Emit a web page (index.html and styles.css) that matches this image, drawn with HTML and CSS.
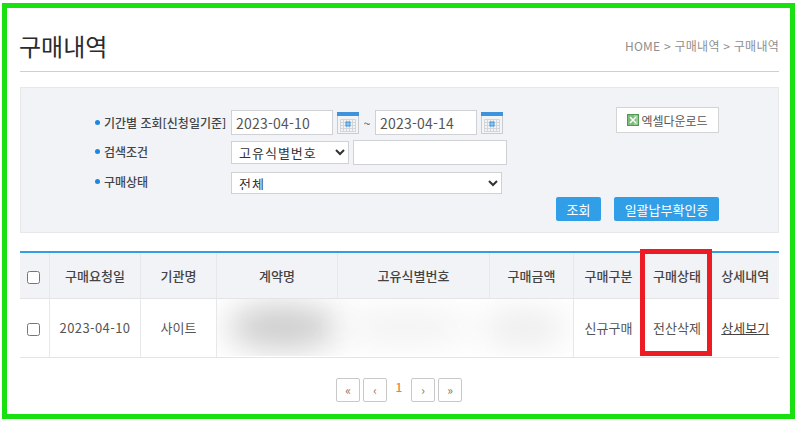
FILE: index.html
```html
<!DOCTYPE html>
<html lang="ko">
<head>
<meta charset="utf-8">
<title>구매내역</title>
<link rel="stylesheet" href="styles.css">
</head>
<body>
<main class="frame">
  <header class="head">
    <h1 class="title">구매내역</h1>
    <div class="crumbs">HOME &gt; 구매내역 &gt; 구매내역</div>
  </header>
  <section class="panel">
    <form class="form">
      <div class="row">
        <label class="label">기간별 조회[신청일기준]</label>
        <input class="date" type="text" value="2023-04-10">
        <svg class="cal" viewBox="0 0 22 22"><use href="#cal"/></svg>
        <span class="tilde">~</span>
        <input class="date" type="text" value="2023-04-14">
        <svg class="cal" viewBox="0 0 22 22"><use href="#cal"/></svg>
      </div>
      <div class="row">
        <label class="label">검색조건</label>
        <select class="sel sel-id"><option>고유식별번호</option></select>
        <input class="keyword" type="text">
      </div>
      <div class="row">
        <label class="label">구매상태</label>
        <select class="sel sel-state"><option>전체</option></select>
      </div>
    </form>
    <div class="actions">
      <button class="excel" type="button">
        <svg class="xl" viewBox="0 0 12 12"><rect x=".5" y=".5" width="11" height="11" fill="#7dbb7a" stroke="#4f9a52"/><path d="M3 3l6 6M9 3L3 9" stroke="#fff" stroke-width="1.5"/><path d="M7 2h3v8H7" fill="none" stroke="#d8ecd6" stroke-width=".7"/></svg>엑셀다운로드
      </button>
      <div class="btns">
        <button class="blue b-search" type="button">조회</button>
        <button class="blue b-cert" type="button">일괄납부확인증</button>
      </div>
    </div>
  </section>
  <div class="table-wrap">
    <table class="grid">
      <colgroup><col class="c1"><col class="c2"><col class="c3"><col class="c4"><col class="c5"><col class="c6"><col class="c7"><col class="c8"><col class="c9"></colgroup>
      <thead>
        <tr>
          <th><input type="checkbox" class="chk"></th>
          <th>구매요청일</th><th>기관명</th><th>계약명</th><th>고유식별번호</th><th>구매금액</th><th>구매구분</th><th>구매상태</th><th>상세내역</th>
        </tr>
      </thead>
      <tbody>
        <tr>
          <td><input type="checkbox" class="chk"></td>
          <td class="when">2023-04-10</td>
          <td>사이트</td>
          <td colspan="3" class="masked"><div class="blobs"><i class="blob b1"></i><i class="blob b2"></i><i class="blob b3"></i></div></td>
          <td>신규구매</td>
          <td>전산삭제</td>
          <td><a class="link" href="#">상세보기</a></td>
        </tr>
      </tbody>
    </table>
    <div class="mark"></div>
  </div>
  <nav class="pager">
    <a class="pg" href="#">«</a>
    <a class="pg" href="#">‹</a>
    <b class="cur">1</b>
    <a class="pg" href="#">›</a>
    <a class="pg" href="#">»</a>
  </nav>
</main>
<svg class="defs" width="0" height="0">
  <symbol id="cal" viewBox="0 0 22 22">
    <rect x=".5" y=".5" width="21" height="21" fill="#f3f4f6" stroke="#c9ccd1"/>
    <rect x="0" y="0" width="22" height="4" fill="#3f93dc"/>
    <path d="M3.5 7.5h15M3.5 10.5h15M3.5 13.5h15M3.5 16.5h15M3.5 7.5v12M6.5 7.5v12M9.5 7.5v12M12.5 7.5v12M15.5 7.5v12M18.5 7.5v12M3.5 19.5h15" fill="none" stroke="#d3d5d8"/>
    <rect x="9" y="10" width="4" height="4" fill="#8cc4f0" stroke="#3f93dc"/>
  </symbol>
</svg>
</body>
</html>
```
FILE: styles.css
```css
* { box-sizing: border-box; }
html, body { margin: 0; background: #fff; }
body {
  width: 800px;
  height: 421px;
  overflow: hidden;
  padding: 3px 5px 2px 2px;
  font-family: "Noto Sans CJK KR", "Noto Sans", sans-serif;
  font-size: 13px;
  color: #444;
}
.frame {
  width: 793px;
  height: 416px;
  border: 5px solid #19e110;
  padding: 0 11px 0 13px;
}
.head {
  height: 64px;
  display: flex;
  justify-content: space-between;
  border-bottom: 1px solid #cfcfcf;
}
.title {
  margin: 0 0 0 -1px;
  padding-top: 20px;
  font-size: 24px;
  line-height: 36px;
  font-weight: 400;
  color: #2b2b2b;
}
.crumbs {
  padding-top: 29px;
  font-size: 12px;
  letter-spacing: .25px;
  line-height: 18px;
  color: #8f8f8f;
}
.panel {
  margin-top: 15px;
  height: 146px;
  background: #f1f3f7;
  border: 1px solid #e6e8ea;
  display: flex;
  justify-content: space-between;
  padding: 19px 59px 11px 72px;
}
.form { display: flex; flex-direction: column; gap: 5px; padding-top: 3px; }
.row { display: flex; align-items: center; height: 25px; }
.label {
  width: 138px;
  flex: none;
  padding-bottom: 1px;
  font-size: 12px;
  font-weight: 500;
  color: #444;
  white-space: nowrap;
  display: flex;
  align-items: center;
}
.row + .row .label { padding-bottom: 3px; }
.label::before {
  content: "";
  width: 5px;
  height: 5px;
  border-radius: 50%;
  background: #1b87e0;
  margin: 0 4px 0 2px;
  flex: none;
}
.date, .keyword, .sel {
  font-family: inherit;
  background: #fff;
  border: 1px solid #cfd1d4;
  color: #555;
  outline: none;
}
.date {
  width: 102px;
  height: 25px;
  font-size: 14px;
  padding: 0 4px;
  letter-spacing: .2px;
}
.cal { width: 22px; height: 22px; margin-left: 4px; flex: none; }
.tilde { width: 16px; text-align: center; font-size: 12px; color: #555; }
.sel { font-size: 13px; color: #333; letter-spacing: 1px; padding: 0 0 3px 3px; }
.sel-id { width: 118px; height: 23px; }
.keyword { width: 154px; height: 25px; margin-left: 4px; }
.sel-state { width: 271px; height: 22px; }
.actions {
  display: flex;
  flex-direction: column;
  justify-content: space-between;
  align-items: flex-end;
}
.excel {
  display: flex;
  align-items: center;
  justify-content: center;
  gap: 2px;
  width: 103px;
  height: 26px;
  background: #fff;
  border: 1px solid #d2d4d6;
  font-family: inherit;
  font-size: 12px;
  color: #555;
  padding: 0;
}
.xl { width: 12px; height: 12px; }
.btns { display: flex; gap: 13px; }
.blue {
  height: 24px;
  background: #319fe8;
  border: 0;
  border-radius: 2px;
  color: #fff;
  font-family: inherit;
  font-size: 13px;
  padding: 0;
}
.b-search { width: 45px; }
.b-cert { width: 105px; }
.table-wrap { position: relative; margin-top: 18px; }
.grid {
  width: 759px;
  table-layout: fixed;
  border-collapse: collapse;
  border-top: 2px solid #319fe0;
}
.c1 { width: 29px; } .c2 { width: 91px; } .c3 { width: 76px; }
.c4 { width: 121px; } .c5 { width: 152px; } .c6 { width: 84px; }
.c7 { width: 70px; } .c8 { width: 67px; } .c9 { width: 69px; }
.grid th, .grid td {
  padding: 0 0 0 1px;
  text-align: center;
  border-left: 1px solid #e6e8ea;
  border-bottom: 1px solid #e3e4e6;
  font-size: 13px;
  white-space: nowrap;
}
.grid th:first-child, .grid td:first-child { border-left: 0; padding: 0 2px 0 0; }
.grid th {
  height: 46px;
  background: #f1f3f7;
  font-weight: 500;
  color: #444;
}
.grid td { height: 59px; color: #555; }
.grid .when { letter-spacing: .4px; }
.chk { margin: 0; width: 13px; height: 13px; vertical-align: middle; }
.masked { position: relative; overflow: hidden; }
.blobs { position: absolute; inset: -2px 0 1px; overflow: hidden; background: #fff; }
.blob { position: absolute; display: block; border-radius: 50%; filter: blur(16px); }
.b1 { left: 10px; top: 8px; width: 112px; height: 44px; background: #cbcbcb; }
.b2 { left: 125px; top: 12px; width: 130px; height: 36px; background: #f2f2f2; }
.b3 { left: 265px; top: 12px; width: 85px; height: 38px; background: #ececec; }
.link { color: #444; text-decoration: underline; }
.mark {
  position: absolute;
  left: 620px;
  top: -2px;
  width: 72px;
  height: 107px;
  border: 5px solid #ed1c24;
  pointer-events: none;
}
.pager {
  display: flex;
  align-items: flex-start;
  justify-content: center;
  margin-top: 20px;
  padding-right: 1px;
  height: 24px;
}
.pg {
  width: 24px;
  height: 24px;
  margin: 0 1.5px;
  display: flex;
  align-items: center;
  justify-content: center;
  border: 1px solid #c8c8c8;
  border-radius: 2px;
  background: #fff;
  color: #777;
  text-decoration: none;
  font-size: 12px;
}
.cur {
  width: 21px;
  text-align: center;
  color: #f08040;
  font-size: 12px;
  font-weight: 500;
  line-height: 18px;
}
.defs { position: absolute; }
```
